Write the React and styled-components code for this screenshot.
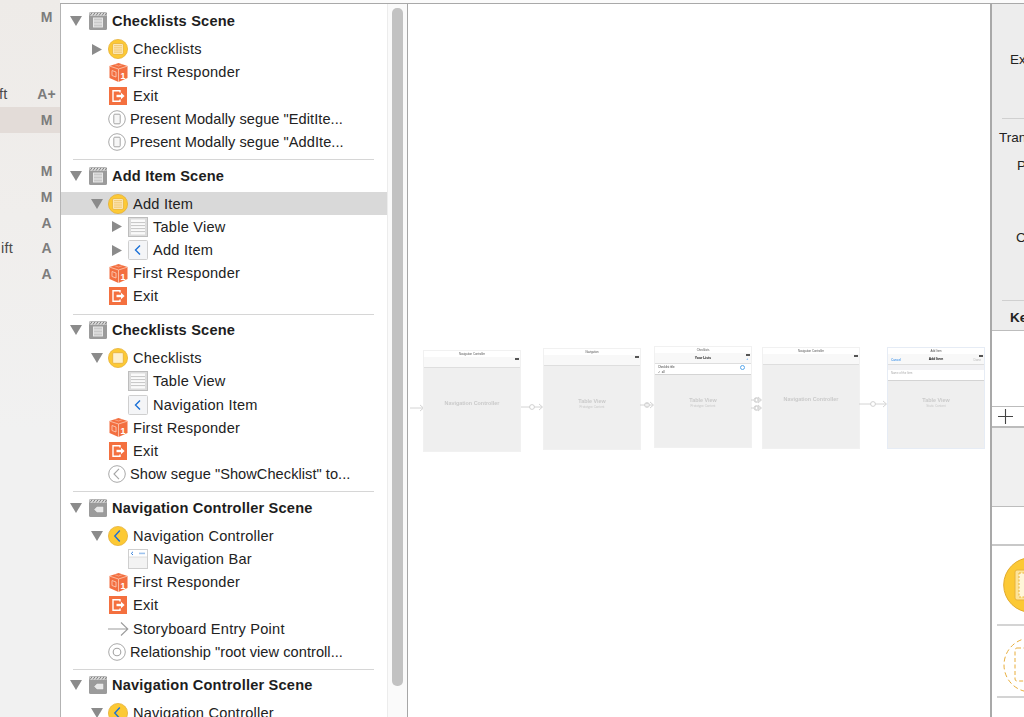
import React from "react";
import styled, { createGlobalStyle } from "styled-components";

const Global = createGlobalStyle`
  html, body { margin: 0; padding: 0; background: #fff; }
  body { font-family: "Liberation Sans", Arial, sans-serif; color: #1c1c1c; }
`;

const Window = styled.div`
  display: flex; width: 1024px; height: 717px; overflow: hidden;
`;

/* ---------- Left file list ---------- */
const Sidebar = styled.aside`
  width: 60px; flex: none; box-sizing: border-box; padding-top: 4px;
  background: linear-gradient(180deg, #eeebe8 0%, #f0eeec 30%, #f1f1f1 60%, #f1f1f1 100%);
`;
const FileRow = styled.div`
  height: 25.72px; display: flex; align-items: center; justify-content: space-between;
  padding-right: 3.5px; overflow: hidden;
  background: ${p => (p.$active ? "#e3dcd8" : "transparent")};
`;
const FileName = styled.span`
  font-size: 14.5px; color: #4a4a4a; white-space: nowrap; margin-left: ${p => p.$offset}px;
  letter-spacing: 0.2px;
`;
const Status = styled.span`
  width: 20px; text-align: center; font-size: 14px; font-weight: 700; color: #7c7c7c; margin-left: auto;
`;

/* ---------- Main ---------- */
const Main = styled.div`
  flex: 1; display: flex; flex-direction: column; min-width: 0;
`;
const TopStrip = styled.div`
  height: 3px; flex: none; background: #fbfbfb; border-bottom: 1px solid #a9a9a9;
`;
const Panes = styled.div`
  flex: 1; display: flex; min-height: 0; border-left: 1px solid #b3b3b3;
`;

/* ---------- Outline ---------- */
const Outline = styled.div`
  width: 326px; flex: none; overflow: hidden; padding-top: 1.7px;
`;
const Group = styled.section`
  padding-bottom: 5.5px;
`;
const Divider = styled.div`
  height: 1px; margin: 0 13px 0 12px; background: #d6d6d6;
`;
const SceneHeader = styled.div`
  height: 32px; box-sizing: border-box; padding: 0 0 1px 5px; display: flex; align-items: center;
`;
const SceneTitle = styled.span`
  margin-left: 5px; font-size: 14.6px; font-weight: 700; letter-spacing: 0.19px; color: #1e1e1e; white-space: nowrap;
`;
const Row = styled.div`
  height: 23.2px; display: flex; align-items: center;
  padding-left: ${p => (p.$level === 2 ? 46 : 26)}px;
  background: ${p => (p.$selected ? "#d9d9d9" : "transparent")};
`;
const Disclosure = styled.span`
  width: 20px; height: 12px; flex: none; display: flex; align-items: center; justify-content: center;
`;
const IconSlot = styled.span`
  width: 22px; height: 22px; flex: none; display: flex; align-items: center; justify-content: center;
`;
const RowLabel = styled.span`
  margin-left: ${p => (p.$tight ? 1 : 4)}px; font-size: 14.6px; color: #222; white-space: nowrap;
  letter-spacing: ${p => (p.$tight ? 0.05 : 0.22)}px;
`;

const Scrollbar = styled.div`
  width: 20px; flex: none; box-sizing: border-box; padding: 4px 4px 31px 4px;
  background: #fafafa; border-left: 1px solid #ececec;
`;
const Thumb = styled.div`
  height: 100%; border-radius: 5px; background: #c2c2c2;
`;

/* ---------- Canvas ---------- */
const Canvas = styled.div`
  flex: 1; position: relative; overflow: hidden; background: #fff;
  border-left: 1px solid #a6a6a6; border-right: 2px solid #a9a9a9;
`;
const SceneCard = styled.div`
  position: absolute; box-sizing: border-box; width: 98px; height: 102px;
  display: flex; flex-direction: column; background: #efefef;
  border: ${p => (p.$selected ? "1px solid #e6ecf5" : "0.5px solid #f1f1f1")};
  filter: blur(0.3px);
`;
const CardTitle = styled.div`
  height: 6px; flex: none; background: #fff; text-align: center;
  font-size: 2.8px; line-height: 6px; color: #555; white-space: nowrap;
`;
const CardNav = styled.div`
  height: 9.5px; flex: none; position: relative; display: flex; align-items: center; justify-content: center;
  background: #f8f8f8; border-bottom: 1px solid #dedede;
  font-size: 3.4px; font-weight: 700; color: #111;
`;
const Battery = styled.span`
  position: absolute; top: 0.5px; right: 1.5px; width: 4px; height: 2px; background: #555;
`;
const NavAccent = styled.span`
  position: absolute; font-size: 3.2px; font-weight: 400; top: 3.5px;
  color: ${p => p.$color};
  ${p => (p.$side === "left" ? "left: 3px;" : "right: 3px;")}
`;
const CardStripes = styled.div`
  height: 5px; flex: none; background: #f2f2f4;
`;
const CardCell = styled.div`
  height: ${p => p.$height}px; flex: none; background: #fff; box-sizing: border-box; padding: 1.5px 3px;
  border-bottom: 1.5px solid #d4d4d4; display: flex; flex-direction: column; gap: 1px; position: relative;
  font-size: 2.8px; color: ${p => p.$muted ? "#aaa" : "#333"};
`;
const CellIcon = styled.span`
  position: absolute; right: 6px; top: 1px; width: 3px; height: 3px; border-radius: 50%;
  border: 0.7px solid #5aa7ea;
`;
const CardBody = styled.div`
  flex: 1; display: flex; flex-direction: column; align-items: center; justify-content: center;
  padding-bottom: ${p => p.$shift}px;
`;
const CardName = styled.div`
  font-size: 5.4px; font-weight: 700; color: #cacaca; white-space: nowrap;
`;
const CardSub = styled.div`
  font-size: 3.1px; color: #c8c8c8; margin-top: 0.8px; white-space: nowrap;
`;

/* ---------- Inspector ---------- */
const Inspector = styled.div`
  width: 32px; flex: none; display: flex; flex-direction: column; overflow: hidden; background: #fff;
`;
const InspectorTop = styled.div`
  height: 326px; flex: none; background: #ededed; border-bottom: 1px solid #bdbdbd;
  position: relative;
`;
const PropLabel = styled.div`
  position: absolute; left: ${p => p.$x}px; top: ${p => p.$y}px;
  font-size: 13.5px; font-weight: ${p => (p.$bold ? 700 : 400)}; color: #222; white-space: nowrap;
`;
const PropRule = styled.div`
  position: absolute; left: 10px; right: 0; top: ${p => p.$y}px; height: 1px; background: #d0d0d0;
`;
const Blank = styled.div`
  height: ${p => p.$h}px; flex: none; background: ${p => p.$bg || "#fff"};
  border-bottom: ${p => p.$line || "none"};
`;
const PlusBar = styled.div`
  height: 19px; flex: none; background: #fff; border-top: 1px solid #bcbcbc; border-bottom: 2px solid #bcbcbc;
  display: flex; align-items: center; padding-left: 6px;
`;
const Library = styled.div`
  display: flex; flex-direction: column;
`;
const LibraryCell = styled.div`
  height: ${p => p.$h}px; flex: none; box-sizing: border-box; margin-left: 5px; border-bottom: 2px solid #d4d4d4;
  padding: ${p => p.$top}px 0 0 6px; display: flex; align-items: flex-start; overflow: hidden;
`;

/* ---------- Icons ---------- */
const TriRight = () => (
  <svg width="10" height="11" viewBox="0 0 10 11"><path d="M0 0 L10 5.5 L0 11Z" fill="#8b8b8b" /></svg>
);
const TriDown = () => (
  <svg width="12" height="10" viewBox="0 0 12 10"><path d="M0 0 H12 L6 10Z" fill="#8b8b8b" /></svg>
);

const SceneIcon = ({ nav }) => (
  <svg width="18" height="18" viewBox="0 0 18 18" style={{ flex: "none", marginLeft: 3 }}>
    <rect x="0" y="0" width="18" height="18" rx="1.5" fill="#9b9b9b" />
    <rect x="0.5" y="0.5" width="17" height="3.4" fill="#d9d9d9" />
    <path d="M1 3.5 L3 0.8 M4 3.5 L6 0.8 M7 3.5 L9 0.8 M10 3.5 L12 0.8 M13 3.5 L15 0.8 M16 3.5 L17.5 1" stroke="#777" strokeWidth="0.9" />
    {nav ? (
      <path d="M5.5 10.5 L8 8 H14 V13 H8Z" fill="#e8e8e8" stroke="#eee" strokeWidth="0.5" />
    ) : (
      <g>
        <rect x="4.5" y="6" width="9" height="9" fill="#c9c9c9" stroke="#eee" strokeWidth="0.9" />
        <path d="M5 9 H13 M5 12 H13" stroke="#eee" strokeWidth="0.9" />
      </g>
    )}
  </svg>
);

const Circle = ({ children }) => (
  <svg width="20" height="20" viewBox="0 0 20 20">
    <circle cx="10" cy="10" r="9.6" fill="#fcc935" stroke="#e2aa2c" strokeWidth="0.7" />
    {children}
  </svg>
);
const ControllerIcon = ({ lines }) => (
  <Circle>
    <rect x="4.7" y="4.7" width="10.6" height="10.6" rx="1" fill="#fdf0cd" stroke="#e6ad35" strokeWidth="0.8" />
    {lines && <path d="M6 6.8 H14 M6 8.9 H14 M6 11 H14 M6 13.1 H14" stroke="#eeb548" strokeWidth="0.9" />}
  </Circle>
);
const NavControllerIcon = () => (
  <Circle>
    <path d="M11.8 4.5 L6.8 10 L11.8 15.5" fill="none" stroke="#1a70d8" strokeWidth="1.4" />
  </Circle>
);
const CubeIcon = () => (
  <svg width="19" height="19" viewBox="0 0 19 19">
    <path d="M9.5 0 L18.5 3 V15 L9.5 19 L0.5 15 V3Z" fill="#f36f40" />
    <path d="M0.8 3.2 L9.5 6 L18.2 3.2" fill="none" stroke="#fbc4ab" strokeWidth="0.9" />
    <path d="M9.5 6 V19" stroke="#fbc4ab" strokeWidth="0.9" />
    <path d="M3 7.5 L7 9 V14 L3 12.5Z" fill="none" stroke="#fbd3c0" strokeWidth="0.8" />
    <path d="M5.5 1.6 L9.5 3 L13.5 1.6" fill="none" stroke="#fbc4ab" strokeWidth="0.6" />
    <text x="14" y="15.5" textAnchor="middle" fontSize="9" fontWeight="700" fontFamily="Liberation Sans" fill="#fff">1</text>
  </svg>
);
const ExitIcon = () => (
  <svg width="18" height="18" viewBox="0 0 18 18">
    <rect width="18" height="18" fill="#f4703f" />
    <path d="M11 5.5 V3.8 H4 V14.2 H11 V12.5" fill="none" stroke="#fff" strokeWidth="1.4" />
    <path d="M7.5 9 H12.5" stroke="#fff" strokeWidth="2.4" />
    <path d="M12 5.8 L15.6 9 L12 12.2Z" fill="#fff" />
  </svg>
);
const TableIcon = () => (
  <svg width="20" height="20" viewBox="0 0 20 20">
    <rect x="0.5" y="0.5" width="19" height="19" fill="#dcdcdc" stroke="#bdbdbd" />
    <rect x="3" y="2.5" width="14" height="15" fill="#fafafa" />
    <path d="M3 5.6 H17 M3 8.6 H17 M3 11.6 H17 M3 14.6 H17" stroke="#c4c4c4" strokeWidth="1" />
  </svg>
);
const NavItemIcon = () => (
  <svg width="20" height="20" viewBox="0 0 20 20">
    <rect x="0.5" y="0.5" width="19" height="19" rx="1" fill="#f4f5f7" stroke="#cfcfcf" />
    <path d="M12 5.5 L7.5 10 L12 14.5" fill="none" stroke="#1a70d8" strokeWidth="1.4" />
  </svg>
);
const NavBarIcon = () => (
  <svg width="20" height="20" viewBox="0 0 20 20">
    <rect x="0.5" y="0.5" width="19" height="19" fill="#f3f3f3" stroke="#cfcfcf" />
    <rect x="1" y="1" width="18" height="7" fill="#fff" />
    <path d="M1 8 H19" stroke="#d6d6d6" strokeWidth="0.8" />
    <path d="M5 2.8 L3.3 4.4 L5 6" fill="none" stroke="#1a70d8" strokeWidth="0.9" />
    <path d="M11 4.4 H17" stroke="#9ec3ee" strokeWidth="1.6" />
  </svg>
);
const SegueRing = ({ children }) => (
  <svg width="18" height="18" viewBox="0 0 18 18" style={{ marginRight: 3 }}>
    <circle cx="9" cy="9" r="8.3" fill="#fff" stroke="#a9a9a9" strokeWidth="1" />
    {children}
  </svg>
);
const ModalIcon = () => (
  <SegueRing><rect x="5.8" y="4.2" width="6.4" height="9.6" rx="1" fill="#f6f6f6" stroke="#a4a4a4" strokeWidth="1" /></SegueRing>
);
const ShowIcon = () => (
  <SegueRing><path d="M11 3.8 L6 9 L11 14.2" fill="none" stroke="#a4a4a4" strokeWidth="1.1" /></SegueRing>
);
const RelationshipIcon = () => (
  <SegueRing><circle cx="9" cy="9" r="3.8" fill="none" stroke="#a4a4a4" strokeWidth="1.1" /></SegueRing>
);
const EntryIcon = () => (
  <svg width="21" height="16" viewBox="0 0 21 16">
    <path d="M0 8 H19.5 M13 1.5 L19.8 8 L13 14.5" fill="none" stroke="#9c9c9c" strokeWidth="1.1" />
  </svg>
);

const Connector = styled.svg`
  position: absolute; overflow: visible;
  left: ${p => p.$x}px; top: ${p => p.$y}px;
`;
const Link = ({ x, y, width, kind }) => (
  <Connector $x={x} $y={y} width={width} height="10" viewBox={`0 0 ${width} 10`}>
    <path d={`M0 5 H${width - 1} M${width - 4} 2 L${width - 0.5} 5 L${width - 4} 8`} fill="none" stroke="#cfcfcf" strokeWidth="0.9" />
    {kind && <circle cx={width / 2} cy="5" r="2.4" fill="#fff" stroke="#c6c6c6" strokeWidth="0.8" />}
    {kind === "modal" && <rect x={width / 2 - 1} y="3.4" width="2" height="3.2" fill="none" stroke="#c6c6c6" strokeWidth="0.5" />}
  </Connector>
);

/* ---------- Data ---------- */
const ICONS = {
  ctrl: <ControllerIcon lines />, ctrlPlain: <ControllerIcon />, cube: <CubeIcon />, exit: <ExitIcon />,
  modal: <ModalIcon />, show: <ShowIcon />, rel: <RelationshipIcon />, table: <TableIcon />,
  item: <NavItemIcon />, navCtrl: <NavControllerIcon />, navBar: <NavBarIcon />, entry: <EntryIcon />,
};
const FR = { icon: "cube", label: "First Responder" };
const EX = { icon: "exit", label: "Exit" };

const scenes = [
  { title: "Checklists Scene", rows: [
    { icon: "ctrl", label: "Checklists", tri: "right" }, FR, EX,
    { icon: "modal", label: 'Present Modally segue "EditIte...', tight: true },
    { icon: "modal", label: 'Present Modally segue "AddIte...', tight: true },
  ] },
  { title: "Add Item Scene", rows: [
    { icon: "ctrl", label: "Add Item", tri: "down", selected: true },
    { icon: "table", label: "Table View", tri: "right", level: 2 },
    { icon: "item", label: "Add Item", tri: "right", level: 2 }, FR, EX,
  ] },
  { title: "Checklists Scene", rows: [
    { icon: "ctrlPlain", label: "Checklists", tri: "down" },
    { icon: "table", label: "Table View", level: 2 },
    { icon: "item", label: "Navigation Item", level: 2 }, FR, EX,
    { icon: "show", label: 'Show segue "ShowChecklist" to...', tight: true },
  ] },
  { title: "Navigation Controller Scene", nav: true, rows: [
    { icon: "navCtrl", label: "Navigation Controller", tri: "down" },
    { icon: "navBar", label: "Navigation Bar", level: 2 }, FR, EX,
    { icon: "entry", label: "Storyboard Entry Point" },
    { icon: "rel", label: 'Relationship "root view controll...', tight: true },
  ] },
  { title: "Navigation Controller Scene", nav: true, rows: [
    { icon: "navCtrl", label: "Navigation Controller", tri: "down" },
  ] },
];

const files = [
  { s: "M" }, {}, {}, { name: "ft", offset: -1, s: "A+" }, { s: "M", active: true }, {},
  { s: "M" }, { s: "M" }, { s: "A" }, { name: "ift", offset: 1, s: "A" }, { s: "A" },
];

const TitleBar = ({ children }) => <CardTitle>{children}</CardTitle>;

export default function App() {
  return (
    <Window>
      <Global />
      <Sidebar>
        {files.map((f, i) => (
          <FileRow key={i} $active={f.active}>
            {f.name && <FileName $offset={f.offset}>{f.name}</FileName>}
            {f.s && <Status>{f.s}</Status>}
          </FileRow>
        ))}
      </Sidebar>
      <Main>
        <TopStrip />
        <Panes>
          <Outline>
            {scenes.map((sc, i) => (
              <React.Fragment key={i}>
                {i > 0 && <Divider />}
                <Group>
                  <SceneHeader>
                    <Disclosure><TriDown /></Disclosure>
                    <SceneIcon nav={sc.nav} />
                    <SceneTitle>{sc.title}</SceneTitle>
                  </SceneHeader>
                  {sc.rows.map((r, j) => (
                    <Row key={j} $level={r.level} $selected={r.selected}>
                      <Disclosure>
                        {r.tri === "right" && <TriRight />}
                        {r.tri === "down" && <TriDown />}
                      </Disclosure>
                      <IconSlot>{ICONS[r.icon]}</IconSlot>
                      <RowLabel $tight={r.tight}>{r.label}</RowLabel>
                    </Row>
                  ))}
                </Group>
              </React.Fragment>
            ))}
          </Outline>
          <Scrollbar><Thumb /></Scrollbar>
          <Canvas>
            <Link x={2} y={399} width={14} />
            <SceneCard style={{ left: 15, top: 346 }}>
              <TitleBar>Navigation Controller</TitleBar>
              <CardNav><Battery /></CardNav>
              <CardBody $shift={12}><CardName>Navigation Controller</CardName></CardBody>
            </SceneCard>
            <Link x={113} y={398} width={22} kind="circle" />
            <SceneCard style={{ left: 135, top: 344 }}>
              <TitleBar>Navigation</TitleBar>
              <CardNav><Battery /></CardNav>
              <CardBody $shift={8}><CardName>Table View</CardName><CardSub>Prototype Content</CardSub></CardBody>
            </SceneCard>
            <Link x={232} y={396} width={14} kind="modal" />
            <SceneCard style={{ left: 246, top: 342 }}>
              <TitleBar>Checklists</TitleBar>
              <CardNav>Your Lists<Battery /><NavAccent $side="right" $color="#1a7fe8">+</NavAccent></CardNav>
              <CardCell $height={11}>
                <span>Checklist title</span>
                <span>✓ all</span>
                <CellIcon />
              </CardCell>
              <CardBody $shift={16}><CardName>Table View</CardName><CardSub>Prototype Content</CardSub></CardBody>
            </SceneCard>
            <Link x={343} y={391} width={11} kind="modal" />
            <Link x={343} y={399} width={11} kind="modal" />
            <SceneCard style={{ left: 354, top: 343 }}>
              <TitleBar>Navigation Controller</TitleBar>
              <CardNav><Battery /></CardNav>
              <CardBody $shift={14}><CardName>Navigation Controller</CardName></CardBody>
            </SceneCard>
            <Link x={451} y={395} width={28} kind="circle" />
            <SceneCard $selected style={{ left: 479, top: 343 }}>
              <TitleBar>Add Item</TitleBar>
              <CardNav>Add Item<Battery /><NavAccent $side="left" $color="#1a7fe8">Cancel</NavAccent><NavAccent $side="right" $color="#b8b8b8">Done</NavAccent></CardNav>
              <CardStripes />
              <CardCell $height={11} $muted><span>Name of the Item</span></CardCell>
              <CardBody $shift={23}><CardName>Table View</CardName><CardSub>Static Content</CardSub></CardBody>
            </SceneCard>
          </Canvas>
          <Inspector>
            <InspectorTop>
              <PropLabel $x={18} $y={48}>Extent</PropLabel>
              <PropRule $y={114} />
              <PropLabel $x={7} $y={126}>Transition</PropLabel>
              <PropLabel $x={25} $y={154}>Presentation</PropLabel>
              <PropLabel $x={24} $y={226}>Content</PropLabel>
              <PropRule $y={296} />
              <PropLabel $x={18} $y={306} $bold>Key</PropLabel>
            </InspectorTop>
            <Blank $h={75} />
            <PlusBar>
              <svg width="15" height="15" viewBox="0 0 15 15"><path d="M7.5 0 V15 M0 7.5 H15" stroke="#444" strokeWidth="1.1" /></svg>
            </PlusBar>
            <Blank $h={78} $bg="#f0f0f0" $line="1px solid #bdbdbd" />
            <Blank $h={37} $line="2px solid #c8c8c8" />
            <Library>
              <LibraryCell $h={80} $top={11}>
                <svg width="56" height="56" viewBox="0 0 56 56" style={{ flex: "none" }}>
                  <circle cx="28" cy="28" r="27.3" fill="#fcc935" stroke="#e2aa2c" strokeWidth="1" />
                  <rect x="12" y="13" width="32" height="30" rx="2" fill="#fde49a" stroke="#e9b23a" />
                  <rect x="16" y="16" width="24" height="24" fill="#fff6d8" stroke="#e9b23a" strokeDasharray="2 1.5" />
                </svg>
              </LibraryCell>
              <LibraryCell $h={72} $top={11}>
                <svg width="56" height="56" viewBox="0 0 56 56" style={{ flex: "none" }}>
                  <circle cx="28" cy="28" r="27" fill="none" stroke="#e8ad3a" strokeWidth="1" strokeDasharray="5 3" />
                  <rect x="12" y="11" width="32" height="33" rx="2" fill="none" stroke="#e8ad3a" strokeDasharray="4 2.5" />
                </svg>
              </LibraryCell>
            </Library>
          </Inspector>
        </Panes>
      </Main>
    </Window>
  );
}
